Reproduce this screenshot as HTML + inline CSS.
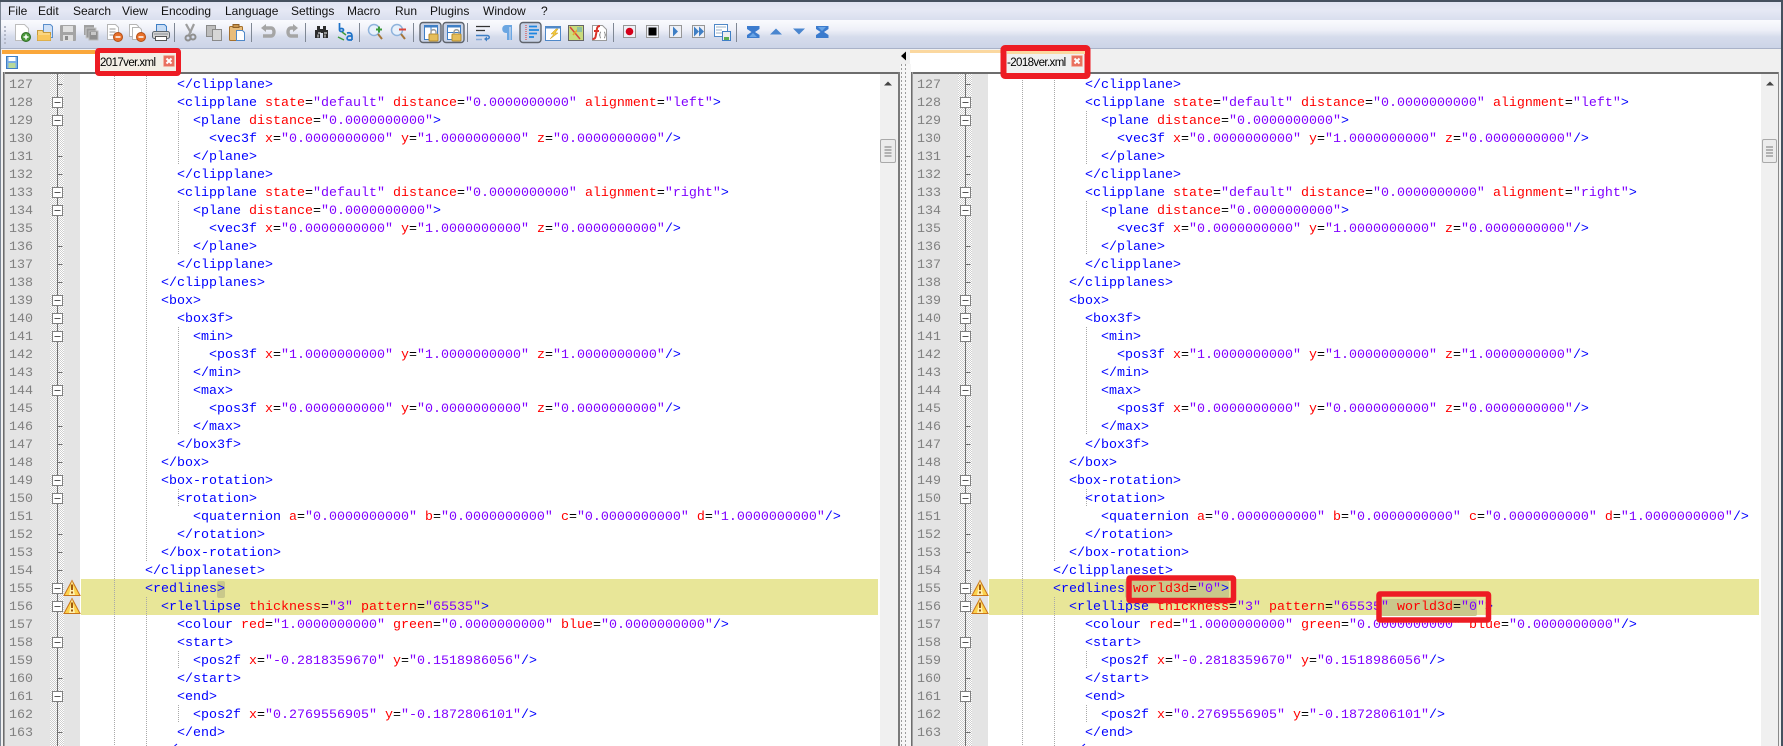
<!DOCTYPE html>
<html><head><meta charset="utf-8"><title>Notepad++ compare</title>
<style>
html,body{margin:0;padding:0;background:#f0f0f0}
#r{position:relative;width:1783px;height:746px;overflow:hidden;background:#f0f0f0}
#r>div,#r>pre,#r>svg{position:absolute}
.m{font:12px/16px "Liberation Sans",sans-serif;color:#111;top:3px;white-space:pre}
pre{margin:0;font:13.333px/18px "Liberation Mono",monospace;white-space:pre;overflow:hidden}
.ln{color:#808080;top:77px;width:30px;height:669px}
.tx{top:77px;height:669px;color:#000}
i{font-style:normal;color:#0000ff}
b{font-weight:normal;color:#ff0000}
u{text-decoration:none;color:#8000ff}
s{text-decoration:none;background:#c9c88b;border-radius:2px;padding:1px 0}
.t{font:11.5px/16px "Liberation Sans",sans-serif;letter-spacing:-.6px;color:#000;white-space:pre}
</style></head><body><div id="r">

<div style="left:0;top:0;width:1783px;height:20px;background:linear-gradient(#dfe3f1,#e6e9f5 50%,#d9dfee)"></div>
<div style="left:0;top:0;width:1783px;height:2px;background:#46515f"></div>
<div style="left:0;top:20px;width:1783px;height:29px;background:linear-gradient(#fafbfe,#eef0f8 35%,#d6dcec 60%,#ccd4e7);border-bottom:1px solid #a9b2c8;box-sizing:border-box"></div>

<div class="m" style="left:8px">File</div><div class="m" style="left:38px">Edit</div><div class="m" style="left:73px">Search</div><div class="m" style="left:122px">View</div><div class="m" style="left:161px">Encoding</div><div class="m" style="left:225px">Language</div><div class="m" style="left:291px">Settings</div><div class="m" style="left:347px">Macro</div><div class="m" style="left:395px">Run</div><div class="m" style="left:430px">Plugins</div><div class="m" style="left:483px">Window</div><div class="m" style="left:541px">?</div>

<!-- panes -->
<div style="left:3px;top:72px;width:896px;height:674px;background:#fff"></div>
<div style="left:3px;top:72px;width:896px;height:2px;background:#6d6d6d"></div>
<div style="left:3px;top:72px;width:1px;height:674px;background:#6d6d6d"></div>
<div style="left:4px;top:72px;width:1px;height:674px;background:#a0a0a0"></div>
<div style="left:898px;top:72px;width:2px;height:674px;background:#7a7a7a"></div>
<div style="left:5px;top:74px;width:45px;height:672px;background:#e4e4e4"></div>
<div style="left:64px;top:74px;width:16px;height:672px;background:#e4e4e4"></div>
<div style="left:81px;top:579px;width:797px;height:36px;background:#e8e698"></div>
<div style="left:880px;top:74px;width:18px;height:672px;background:#f0f0f0"></div>

<div style="left:911px;top:72px;width:868px;height:674px;background:#fff"></div>
<div style="left:911px;top:72px;width:868px;height:2px;background:#6d6d6d"></div>
<div style="left:911px;top:72px;width:1px;height:674px;background:#6d6d6d"></div>
<div style="left:912px;top:72px;width:1px;height:674px;background:#a0a0a0"></div>
<div style="left:1778px;top:72px;width:1px;height:674px;background:#8a8a8a"></div>
<div style="left:913px;top:74px;width:45px;height:672px;background:#e4e4e4"></div>
<div style="left:972px;top:74px;width:16px;height:672px;background:#e4e4e4"></div>
<div style="left:989px;top:579px;width:770px;height:36px;background:#e8e698"></div>
<div style="left:1761px;top:74px;width:17px;height:672px;background:#f0f0f0"></div>
<div style="left:1781px;top:0;width:2px;height:746px;background:#46515f"></div>
<div style="left:0;top:2px;width:1px;height:744px;background:#7c8694"></div>

<!-- tabs -->
<div style="left:2px;top:50px;width:93px;height:22px;background:#fff"></div>
<div style="left:2px;top:50px;width:93px;height:4px;background:#faa73a"></div>
<div style="left:910px;top:50px;width:92px;height:22px;background:#fff"></div>
<div style="left:910px;top:50px;width:180px;height:3px;background:#fbd8a0"></div>

<svg width="1783" height="746" viewBox="0 0 1783 746" style="left:0;top:0">
<defs>
<pattern id="h" width="2" height="2" patternUnits="userSpaceOnUse"><rect width="2" height="2" fill="#fff"/><rect width="1" height="1" fill="#cfcfcf"/><rect x="1" y="1" width="1" height="1" fill="#cfcfcf"/></pattern>
<pattern id="sp" width="4" height="4" patternUnits="userSpaceOnUse"><rect width="4" height="4" fill="#f6f6f6"/><rect x="0" y="0" width="2" height="2" fill="#9c9c9c"/></pattern>
<g id="fb"><rect x="52.500" y="-5" width="10" height="10" fill="#fff" stroke="#808080"/><path d="M54.500 0h6" stroke="#555"/></g>
<path id="ft" d="M57.500 0h5" stroke="#707070"/>
<g id="wn"><path d="M72 -7.500L80 7.500H64Z" fill="#fcd24c" stroke="#c8741a"/><path d="M72 -7.500L75 7H69Z" fill="#fff2b0"/><path d="M72 -3.500V2" stroke="#a05a10" stroke-width="2"/><path d="M72 3.500V5.500" stroke="#a05a10" stroke-width="2"/></g>
<g id="gut">
<rect x="50" y="74" width="14" height="672" fill="url(#h)"/>
<rect x="57" y="74" width="1" height="672" fill="#707070"/>
<use href="#ft" y="84.500"/><use href="#fb" y="102.500"/><use href="#fb" y="120.500"/><use href="#ft" y="156.500"/><use href="#ft" y="174.500"/><use href="#fb" y="192.500"/><use href="#fb" y="210.500"/><use href="#ft" y="246.500"/><use href="#ft" y="264.500"/><use href="#ft" y="282.500"/><use href="#fb" y="300.500"/><use href="#fb" y="318.500"/><use href="#fb" y="336.500"/><use href="#ft" y="372.500"/><use href="#fb" y="390.500"/><use href="#ft" y="426.500"/><use href="#ft" y="444.500"/><use href="#ft" y="462.500"/><use href="#fb" y="480.500"/><use href="#fb" y="498.500"/><use href="#ft" y="534.500"/><use href="#ft" y="552.500"/><use href="#ft" y="570.500"/><use href="#fb" y="588.500"/><use href="#fb" y="606.500"/><use href="#fb" y="642.500"/><use href="#ft" y="678.500"/><use href="#fb" y="696.500"/><use href="#ft" y="732.500"/>
<use href="#wn" y="588"/><use href="#wn" y="606"/>
<g stroke="#a8a8a8" stroke-dasharray="1 1" fill="none">
<path d="M114.500 74V746"/>
<path d="M146.500 74V561M146.500 597V746"/>
<path d="M178.500 111V165M178.500 201V255M178.500 327V435M178.500 489V507M178.500 651V669M178.500 705V723"/>
</g>
<path d="M174.500 746L177 744" stroke="#0000ff" fill="none"/>
</g>
</defs>
<use href="#gut"/><use href="#gut" x="908"/>

<!-- splitter -->
<rect x="900" y="64" width="11" height="682" fill="#f6f6f6"/>
<rect x="901" y="64" width="2" height="682" fill="url(#sp)"/>
<rect x="905" y="64" width="2" height="682" fill="url(#sp)"/>
<path d="M901 56L906 51.500V60.500Z" fill="#000"/>

<!-- scrollbars -->
<g><path d="M884 85.500L888 81.500L892 85.500Z" fill="#444"/><rect x="880.500" y="139.500" width="15" height="23" rx="1.500" fill="#ececec" stroke="#a9a9a9"/><path d="M884.500 147h7M884.500 150h7M884.500 153h7M884.500 156h7" stroke="#777"/></g>
<g transform="translate(882,0)"><path d="M884 85.500L888 81.500L892 85.500Z" fill="#444"/><rect x="880.500" y="139.500" width="14" height="23" rx="1.500" fill="#ececec" stroke="#a9a9a9"/><path d="M884 147h7M884 150h7M884 153h7M884 156h7" stroke="#777"/></g>

<!-- toolbar -->
<g fill="#b4b9c8"><rect x="4" y="26" width="2" height="2"/><rect x="4" y="30" width="2" height="2"/><rect x="4" y="34" width="2" height="2"/><rect x="4" y="38" width="2" height="2"/><rect x="4" y="42" width="2" height="2"/></g>
<path d="M174.500 23V42M251.500 23V42M305.500 23V42M359.500 23V42M413.500 23V42M467.500 23V42M613.500 23V42M736.500 23V42" stroke="#7f8794"/>

<!-- new -->
<path d="M15.500 24.500h9l4 4v12h-13z" fill="#fff" stroke="#bdbdbd"/><circle cx="26" cy="37" r="4.500" fill="#4d9a3c" stroke="#2f6d25"/><path d="M26 34.500v5M23.500 37h5" stroke="#fff" stroke-width="1.500"/>
<!-- open -->
<path d="M43.500 24.500h7l2 2v11h-9z" fill="#cfe0f6" stroke="#5b8fcc"/><path d="M37.500 30.500h5l1 2h7v8h-13z" fill="#fbd681" stroke="#c59a3c"/><path d="M37.500 35h13v5.500h-13z" fill="#f8c65c"/>
<!-- save gray -->
<rect x="60" y="25" width="16" height="16" rx="1" fill="#a4a4a4"/><rect x="63" y="26" width="10" height="6" fill="#e0e0e0"/><rect x="63" y="35" width="10" height="6" fill="#dedede"/><rect x="65" y="36" width="3" height="4" fill="#8c8c8c"/>
<!-- save all -->
<rect x="84" y="25" width="10" height="10" fill="#a0a0a0"/><rect x="86" y="28" width="10" height="10" fill="#979797" stroke="#c8c8c8"/><rect x="89" y="31" width="9" height="9" fill="#8e8e8e" stroke="#bbb"/><rect x="91" y="32" width="5" height="3" fill="#c8c8c8"/>
<!-- close -->
<path d="M107.500 24.500h8l3 3v12h-11z" fill="#fff" stroke="#b5b5b5"/><path d="M109.500 29h6M109.500 32h6M109.500 35h4" stroke="#9a9a9a"/><circle cx="118" cy="37" r="4.500" fill="#e8702a" stroke="#b34e16"/><path d="M115.500 37h5" stroke="#fff" stroke-width="1.500"/>
<!-- close all -->
<path d="M129.500 24.500h7l2 2v10h-9z" fill="#fff" stroke="#b5b5b5"/><path d="M132.500 27.500h7l2 2v10h-9z" fill="#fff" stroke="#b5b5b5"/><circle cx="141" cy="37" r="4.500" fill="#e8702a" stroke="#b34e16"/><path d="M138.500 37h5" stroke="#fff" stroke-width="1.500"/>
<!-- print -->
<path d="M156.500 24.500h8l2 2v6h-10z" fill="#c7dcf5" stroke="#3f7fc5"/><rect x="152.500" y="31.500" width="17" height="7" rx="2" fill="#d4d4d4" stroke="#5d6770"/><rect x="155.500" y="36.500" width="11" height="4" fill="#fff" stroke="#555"/><path d="M154 34h14" stroke="#8a8f96"/>
<!-- cut -->
<path d="M194 24L189 35M186 24L191 33" stroke="#9d9d9d" stroke-width="2.200" fill="none"/><circle cx="188" cy="38" r="2.500" fill="none" stroke="#8f8f8f" stroke-width="2"/><circle cx="193" cy="37" r="2.500" fill="none" stroke="#8f8f8f" stroke-width="2"/>
<!-- copy -->
<rect x="206.500" y="25.500" width="9" height="11" fill="#bdbdbd" stroke="#8a8a8a"/><rect x="212.500" y="29.500" width="9" height="11" fill="#d6d6d6" stroke="#8a8a8a"/>
<!-- paste -->
<rect x="229.500" y="26.500" width="13" height="14" rx="1" fill="#e8bd7c" stroke="#a5702c"/><rect x="233" y="24.500" width="6" height="3" fill="#c9954d" stroke="#8d6029"/><path d="M236.500 30.500h6l2 2v8h-8z" fill="#fff" stroke="#4f88c8"/>
<!-- undo redo -->
<path d="M265 28h6c4 0 4 8 0 8h-8" fill="none" stroke="#a5a5a5" stroke-width="3.400"/><path d="M266 24v8l-5-4z" fill="#a5a5a5"/>
<path d="M298 36h-7c-4 0-4-8 0-8h3" fill="none" stroke="#a5a5a5" stroke-width="3.400"/><path d="M293 24v8l5-4z" fill="#a5a5a5"/>
<!-- find -->
<path d="M317 26h3v3h3v-3h3v4h2v8h-5v-5h-3v5h-5v-8h2z" fill="#2c2c2c"/><path d="M318 33h3M324 33h3" stroke="#fff"/><rect x="317" y="34.500" width="2" height="3" fill="#8a8a8a"/><rect x="324" y="34.500" width="2" height="3" fill="#8a8a8a"/>
<!-- replace -->
<path d="M339.500 23v7c0 2 4 2 4 0s-4-2-4 0" fill="none" stroke="#1d72c8" stroke-width="1.700"/><path d="M347 33c4-1 5 1 5 3v4M352 36h-3c-2 0-3 4 0 4h3" fill="none" stroke="#1d72c8" stroke-width="1.700"/><path d="M342 32l4 3M338 37l6 3" stroke="#3c9b3c" stroke-width="1.500"/>
<!-- zoom -->
<circle cx="374" cy="30" r="5.500" fill="#e8f1fb" stroke="#8fb3dc" stroke-width="1.500"/><path d="M378 34l4 5" stroke="#a5763a" stroke-width="2"/><path d="M376 29.500h6M379 26.500v6" stroke="#3a9a3a" stroke-width="2"/>
<circle cx="397" cy="30" r="5.500" fill="#e8f1fb" stroke="#8fb3dc" stroke-width="1.500"/><path d="M401 34l4 5" stroke="#a5763a" stroke-width="2"/><path d="M399 29.500h7" stroke="#d9443a" stroke-width="2"/>
<!-- active buttons -->
<g fill="#c9d3e6" stroke="#5f646c" stroke-width="1.400"><rect x="420" y="22.500" width="21" height="20" rx="3"/><rect x="443" y="22.500" width="21" height="20" rx="3"/><rect x="520" y="22.500" width="21" height="20" rx="3"/></g>
<rect x="424.500" y="25.500" width="13" height="14" fill="#fff" stroke="#3f7fc5"/><path d="M424.500 26.500h13" stroke="#3f7fc5" stroke-width="2"/><path d="M431 27v12" stroke="#3f7fc5"/>
<rect x="447.500" y="25.500" width="13" height="14" fill="#fff" stroke="#3f7fc5"/><path d="M447.500 26.500h13" stroke="#3f7fc5" stroke-width="2"/><path d="M448 32.500h12" stroke="#3f7fc5"/>
<rect x="429" y="34" width="9" height="7" rx="1" fill="#e5bd5a" stroke="#b78e2f"/><path d="M431 34v-2c0-3 5-3 5 0v2" fill="none" stroke="#9a9a9a" stroke-width="1.400"/>
<rect x="452" y="34" width="9" height="7" rx="1" fill="#e5bd5a" stroke="#b78e2f"/><path d="M454 34v-2c0-3 5-3 5 0v2" fill="none" stroke="#9a9a9a" stroke-width="1.400"/>
<!-- wrap -->
<path d="M476 26.500h14M476 30.500h9" stroke="#333" stroke-width="1.300"/><path d="M476 35.500h11c3 0 3 3.500 0 3.500h-2" fill="none" stroke="#3f7fc5" stroke-width="1.500"/><path d="M476 39.500h6" stroke="#86a9d6" stroke-width="1.500"/><path d="M487 36.500l-3 2.500 3 2.500z" fill="#3f7fc5"/>
<!-- pilcrow -->
<path d="M512 25h-6c-5 0-5 8 0 8h1v7h2.500V27h1v13h1.500z" fill="#6ba6e2"/>
<!-- guides -->
<path d="M526 25v15" stroke="#d33" stroke-dasharray="1 1"/><path d="M529 26.500h8M529 30h10M529 33.500h8M529 37h5" stroke="#1f86e0" stroke-width="1.800"/>
<!-- lightning -->
<rect x="545.500" y="26.500" width="15" height="14" fill="#fff" stroke="#4f88c8"/><path d="M545.500 27.500h15" stroke="#4f88c8" stroke-width="2"/><path d="M556 29l-5 5h3l-4 5 8-6h-3l3-4z" fill="#f4c93c" stroke="#c99a20" stroke-width=".5"/>
<!-- map -->
<rect x="568.500" y="25.500" width="15" height="15" fill="#c9dc7c" stroke="#666"/><path d="M570 27l10 12" stroke="#d9443a" stroke-width="1.500"/><path d="M580 27l-7 8" stroke="#e8a52c" stroke-width="1.500"/><rect x="577" y="27" width="5" height="5" fill="#8fc0a0"/>
<!-- func -->
<path d="M592.500 25.500h10l4 4v11h-14z" fill="#fff" stroke="#9a9a9a"/><path d="M600 26c-3 0-3 2-3.500 6l-1 5c-.5 2-2 2-3 2M594 31h5" fill="none" stroke="#d9342a" stroke-width="2"/><path d="M601 32c-1 0-1 1-1 2s-1 1-1 1 1 0 1 1 0 2 1 2M604 32c1 0 1 1 1 2s1 1 1 1-1 0-1 1 0 2-1 2" fill="none" stroke="#777" stroke-width=".8"/>
<!-- macro -->
<g fill="#eef0f6" stroke="#969696"><rect x="623.500" y="25.500" width="12" height="12"/><rect x="646.500" y="25.500" width="12" height="12"/><rect x="669.500" y="25.500" width="12" height="12"/><rect x="692.500" y="25.500" width="12" height="12"/></g>
<circle cx="629.500" cy="31.500" r="3.800" fill="#d4001a"/>
<rect x="648.500" y="27.500" width="8" height="8" fill="#000"/>
<path d="M673 26.500l5 5-5 5z" fill="#3f7fc5"/>
<path d="M694 26.500l5 5-5 5zM699 26.500l5 5-5 5z" fill="#3f7fc5"/>
<path d="M714.500 24.500h13v12h-13z" fill="#fff" stroke="#4f88c8"/><path d="M716 27h10M716 30h6M716 33h6" stroke="#9ab0c8"/><rect x="722.500" y="31.500" width="8" height="9" fill="#eee" stroke="#3f7fc5"/><rect x="724" y="37" width="5" height="3" fill="#5cae52"/>
<!-- nav -->
<path d="M747 26h12.500v3l-4.500 3 4.500 3v3h-12.500v-3l4.500-3-4.500-3z" fill="#3b7bce"/><path d="M749 37h8l-4-4z" fill="#6aa5e6"/>
<path d="M770 34.500l6-6 6 6z" fill="#4a86cf"/><path d="M793 28.500l6 6 6-6z" fill="#4a86cf"/>
<path d="M816 26h12.500v3l-4.500 3 4.500 3v3h-12.500v-3l4.500-3-4.500-3z" fill="#3b7bce"/><path d="M818 27h8l-4 4z" fill="#6aa5e6"/>
<!-- tab icon -->
<rect x="6.500" y="56.500" width="11" height="12" fill="#7aaee6" stroke="#3f7fc5"/><rect x="8.500" y="57" width="7" height="4" fill="#fff"/><rect x="8.500" y="63" width="7" height="5" fill="#b8d99a"/>
</svg>

<pre class="ln" style="left:9px">127
128
129
130
131
132
133
134
135
136
137
138
139
140
141
142
143
144
145
146
147
148
149
150
151
152
153
154
155
156
157
158
159
160
161
162
163</pre>
<pre class="ln" style="left:917px">127
128
129
130
131
132
133
134
135
136
137
138
139
140
141
142
143
144
145
146
147
148
149
150
151
152
153
154
155
156
157
158
159
160
161
162
163</pre>

<pre class="tx" style="left:81px;width:797px">            <i>&lt;/clipplane&gt;</i>
            <i>&lt;clipplane</i> <b>state</b>=<u>"default"</u> <b>distance</b>=<u>"0.0000000000"</u> <b>alignment</b>=<u>"left"</u><i>&gt;</i>
              <i>&lt;plane</i> <b>distance</b>=<u>"0.0000000000"</u><i>&gt;</i>
                <i>&lt;vec3f</i> <b>x</b>=<u>"0.0000000000"</u> <b>y</b>=<u>"1.0000000000"</u> <b>z</b>=<u>"0.0000000000"</u><i>/&gt;</i>
              <i>&lt;/plane&gt;</i>
            <i>&lt;/clipplane&gt;</i>
            <i>&lt;clipplane</i> <b>state</b>=<u>"default"</u> <b>distance</b>=<u>"0.0000000000"</u> <b>alignment</b>=<u>"right"</u><i>&gt;</i>
              <i>&lt;plane</i> <b>distance</b>=<u>"0.0000000000"</u><i>&gt;</i>
                <i>&lt;vec3f</i> <b>x</b>=<u>"0.0000000000"</u> <b>y</b>=<u>"1.0000000000"</u> <b>z</b>=<u>"0.0000000000"</u><i>/&gt;</i>
              <i>&lt;/plane&gt;</i>
            <i>&lt;/clipplane&gt;</i>
          <i>&lt;/clipplanes&gt;</i>
          <i>&lt;box&gt;</i>
            <i>&lt;box3f&gt;</i>
              <i>&lt;min&gt;</i>
                <i>&lt;pos3f</i> <b>x</b>=<u>"1.0000000000"</u> <b>y</b>=<u>"1.0000000000"</u> <b>z</b>=<u>"1.0000000000"</u><i>/&gt;</i>
              <i>&lt;/min&gt;</i>
              <i>&lt;max&gt;</i>
                <i>&lt;pos3f</i> <b>x</b>=<u>"0.0000000000"</u> <b>y</b>=<u>"0.0000000000"</u> <b>z</b>=<u>"0.0000000000"</u><i>/&gt;</i>
              <i>&lt;/max&gt;</i>
            <i>&lt;/box3f&gt;</i>
          <i>&lt;/box&gt;</i>
          <i>&lt;box-rotation&gt;</i>
            <i>&lt;rotation&gt;</i>
              <i>&lt;quaternion</i> <b>a</b>=<u>"0.0000000000"</u> <b>b</b>=<u>"0.0000000000"</u> <b>c</b>=<u>"0.0000000000"</u> <b>d</b>=<u>"1.0000000000"</u><i>/&gt;</i>
            <i>&lt;/rotation&gt;</i>
          <i>&lt;/box-rotation&gt;</i>
        <i>&lt;/clipplaneset&gt;</i>
        <i>&lt;redlines</i><s><i>&gt;</i></s>
          <i>&lt;rlellipse</i> <b>thickness</b>=<u>"3"</u> <b>pattern</b>=<u>"65535"</u><i>&gt;</i>
            <i>&lt;colour</i> <b>red</b>=<u>"1.0000000000"</u> <b>green</b>=<u>"0.0000000000"</u> <b>blue</b>=<u>"0.0000000000"</u><i>/&gt;</i>
            <i>&lt;start&gt;</i>
              <i>&lt;pos2f</i> <b>x</b>=<u>"-0.2818359670"</u> <b>y</b>=<u>"0.1518986056"</u><i>/&gt;</i>
            <i>&lt;/start&gt;</i>
            <i>&lt;end&gt;</i>
              <i>&lt;pos2f</i> <b>x</b>=<u>"0.2769556905"</u> <b>y</b>=<u>"-0.1872806101"</u><i>/&gt;</i>
            <i>&lt;/end&gt;</i></pre>

<pre class="tx" style="left:989px;width:770px">            <i>&lt;/clipplane&gt;</i>
            <i>&lt;clipplane</i> <b>state</b>=<u>"default"</u> <b>distance</b>=<u>"0.0000000000"</u> <b>alignment</b>=<u>"left"</u><i>&gt;</i>
              <i>&lt;plane</i> <b>distance</b>=<u>"0.0000000000"</u><i>&gt;</i>
                <i>&lt;vec3f</i> <b>x</b>=<u>"0.0000000000"</u> <b>y</b>=<u>"1.0000000000"</u> <b>z</b>=<u>"0.0000000000"</u><i>/&gt;</i>
              <i>&lt;/plane&gt;</i>
            <i>&lt;/clipplane&gt;</i>
            <i>&lt;clipplane</i> <b>state</b>=<u>"default"</u> <b>distance</b>=<u>"0.0000000000"</u> <b>alignment</b>=<u>"right"</u><i>&gt;</i>
              <i>&lt;plane</i> <b>distance</b>=<u>"0.0000000000"</u><i>&gt;</i>
                <i>&lt;vec3f</i> <b>x</b>=<u>"0.0000000000"</u> <b>y</b>=<u>"1.0000000000"</u> <b>z</b>=<u>"0.0000000000"</u><i>/&gt;</i>
              <i>&lt;/plane&gt;</i>
            <i>&lt;/clipplane&gt;</i>
          <i>&lt;/clipplanes&gt;</i>
          <i>&lt;box&gt;</i>
            <i>&lt;box3f&gt;</i>
              <i>&lt;min&gt;</i>
                <i>&lt;pos3f</i> <b>x</b>=<u>"1.0000000000"</u> <b>y</b>=<u>"1.0000000000"</u> <b>z</b>=<u>"1.0000000000"</u><i>/&gt;</i>
              <i>&lt;/min&gt;</i>
              <i>&lt;max&gt;</i>
                <i>&lt;pos3f</i> <b>x</b>=<u>"0.0000000000"</u> <b>y</b>=<u>"0.0000000000"</u> <b>z</b>=<u>"0.0000000000"</u><i>/&gt;</i>
              <i>&lt;/max&gt;</i>
            <i>&lt;/box3f&gt;</i>
          <i>&lt;/box&gt;</i>
          <i>&lt;box-rotation&gt;</i>
            <i>&lt;rotation&gt;</i>
              <i>&lt;quaternion</i> <b>a</b>=<u>"0.0000000000"</u> <b>b</b>=<u>"0.0000000000"</u> <b>c</b>=<u>"0.0000000000"</u> <b>d</b>=<u>"1.0000000000"</u><i>/&gt;</i>
            <i>&lt;/rotation&gt;</i>
          <i>&lt;/box-rotation&gt;</i>
        <i>&lt;/clipplaneset&gt;</i>
        <i>&lt;redlines</i><s> <b>world3d</b>=<u>"0"</u><i>&gt;</i></s>
          <i>&lt;rlellipse</i> <b>thickness</b>=<u>"3"</u> <b>pattern</b>=<u>"65535</u><s><u>"</u> <b>world3d</b>=<u>"0</u></s><u>"</u><i>&gt;</i>
            <i>&lt;colour</i> <b>red</b>=<u>"1.0000000000"</u> <b>green</b>=<u>"0.0000000000"</u> <b>blue</b>=<u>"0.0000000000"</u><i>/&gt;</i>
            <i>&lt;start&gt;</i>
              <i>&lt;pos2f</i> <b>x</b>=<u>"-0.2818359670"</u> <b>y</b>=<u>"0.1518986056"</u><i>/&gt;</i>
            <i>&lt;/start&gt;</i>
            <i>&lt;end&gt;</i>
              <i>&lt;pos2f</i> <b>x</b>=<u>"0.2769556905"</u> <b>y</b>=<u>"-0.1872806101"</u><i>/&gt;</i>
            <i>&lt;/end&gt;</i></pre>

<!-- red annotation boxes + tab labels -->
<svg width="1783" height="746" viewBox="0 0 1783 746" style="left:0;top:0">
<rect x="97.500" y="50.500" width="81" height="23" rx="1.500" fill="#f3efe6" stroke="#ed1c24" stroke-width="5"/>
<rect x="1003.500" y="48" width="84" height="28" rx="1.500" fill="#f0f0f0" stroke="#ed1c24" stroke-width="6"/>
<rect x="1007" y="51" width="78" height="3" fill="#fbd8a0"/>
<rect x="163.500" y="55.500" width="11" height="11" rx="1" fill="#e9705f" stroke="#f4b4a4"/><path d="M166.500 58.500l5 5M171.500 58.500l-5 5" stroke="#fff" stroke-width="2"/>
<rect x="1071.500" y="55.500" width="11" height="11" rx="1" fill="#e9705f" stroke="#f4b4a4"/><path d="M1074.500 58.500l5 5M1079.500 58.500l-5 5" stroke="#fff" stroke-width="2"/>
<rect x="1129" y="578" width="104.500" height="22.500" rx="1" fill="none" stroke="#ed1c24" stroke-width="5.500"/>
<rect x="1379" y="594" width="109.500" height="26" rx="1" fill="none" stroke="#ed1c24" stroke-width="5.500"/>
</svg>
<div class="t" style="left:100px;top:55px">2017ver.xml</div>
<div class="t" style="left:1007px;top:55px">-2018ver.xml</div>

</div></body></html>
